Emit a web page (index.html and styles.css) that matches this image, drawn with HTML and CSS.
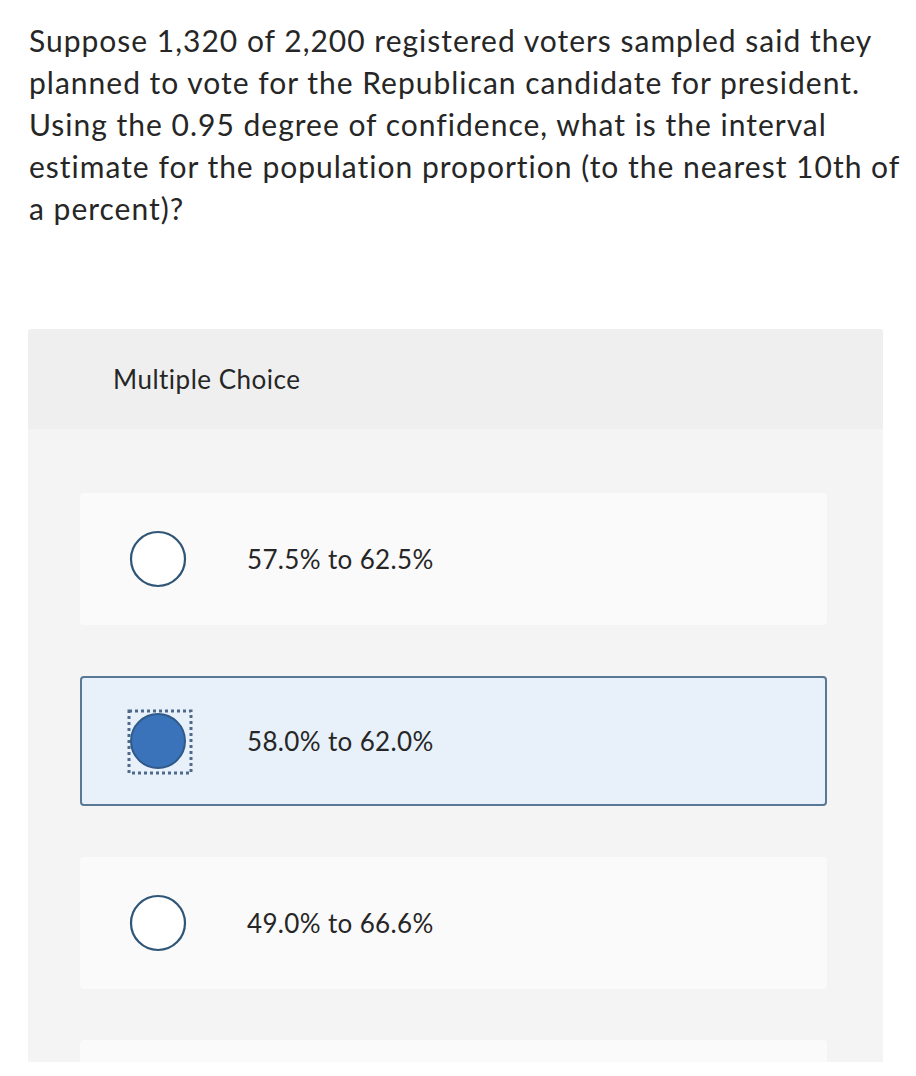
FILE: index.html
```html
<!DOCTYPE html>
<html>
<head>
<meta charset="utf-8">
<link rel="stylesheet" href="styles.css">
</head>
<body>
<p class="question">Suppose 1,320 of 2,200 registered voters sampled said they planned to vote for the Republican candidate for president. Using the 0.95 degree of confidence, what is the interval estimate for the population proportion (to the nearest 10th of a percent)?</p>
<section class="panel">
  <div class="panel-head">Multiple Choice</div>
  <div class="panel-body">
    <div class="option">
      <span class="radio">
        <svg width="68" height="68" viewBox="0 0 68 68"><circle cx="33" cy="34" r="27" fill="#ffffff" stroke="#2f5577" stroke-width="2.2"/></svg>
      </span>
      <span class="label">57.5% to 62.5%</span>
    </div>
    <div class="option selected">
      <span class="radio">
        <svg width="68" height="68" viewBox="0 0 68 68"><rect x="4" y="4" width="62" height="62" fill="none" stroke="#4d6a8a" stroke-width="3" stroke-dasharray="3 3"/><circle cx="33" cy="34" r="27" fill="#3a73b9" stroke="#2f5a8a" stroke-width="2"/></svg>
      </span>
      <span class="label">58.0% to 62.0%</span>
    </div>
    <div class="option">
      <span class="radio">
        <svg width="68" height="68" viewBox="0 0 68 68"><circle cx="33" cy="34" r="27" fill="#ffffff" stroke="#2f5577" stroke-width="2.2"/></svg>
      </span>
      <span class="label">49.0% to 66.6%</span>
    </div>
    <div class="option">
      <span class="radio"></span>
      <span class="label"></span>
    </div>
  </div>
</section>
</body>
</html>
```
FILE: styles.css
```css
html, body {
  margin: 0;
  padding: 0;
  background: #ffffff;
}
body {
  font-family: Lato, "Liberation Sans", sans-serif;
  color: #262626;
  font-variant-ligatures: none;
}
.question {
  margin: 0;
  padding: 19px 0 0 29px;
  width: 884px;
  font-size: 30px;
  line-height: 42px;
  letter-spacing: 1px;
}
.panel {
  margin: 100px 0 0 28px;
  width: 855px;
  height: 733px;
  overflow: hidden;
  background: #f4f4f4;
  border-radius: 3px 3px 0 0;
}
.panel-head {
  height: 100px;
  display: flex;
  align-items: center;
  padding-left: 85px;
  background: #efefef;
  font-size: 26px;
  letter-spacing: 0.5px;
}
.panel-body {
  padding: 64px 56px 0 52px;
  display: flex;
  flex-direction: column;
  gap: 51px;
}
.option {
  height: 132px;
  box-sizing: border-box;
  display: flex;
  align-items: center;
  padding-left: 45px;
  background: #fafafa;
  border-radius: 4px;
  flex-shrink: 0;
}
.option.selected {
  height: 130px;
  padding-left: 43px;
  background: #e8f1fa;
  border: 2px solid #587896;
}
.radio {
  width: 68px;
  height: 68px;
  display: block;
  flex-shrink: 0;
}
.radio svg {
  display: block;
}
.label {
  margin-left: 54px;
  font-size: 26px;
  letter-spacing: 0.35px;
}
```
